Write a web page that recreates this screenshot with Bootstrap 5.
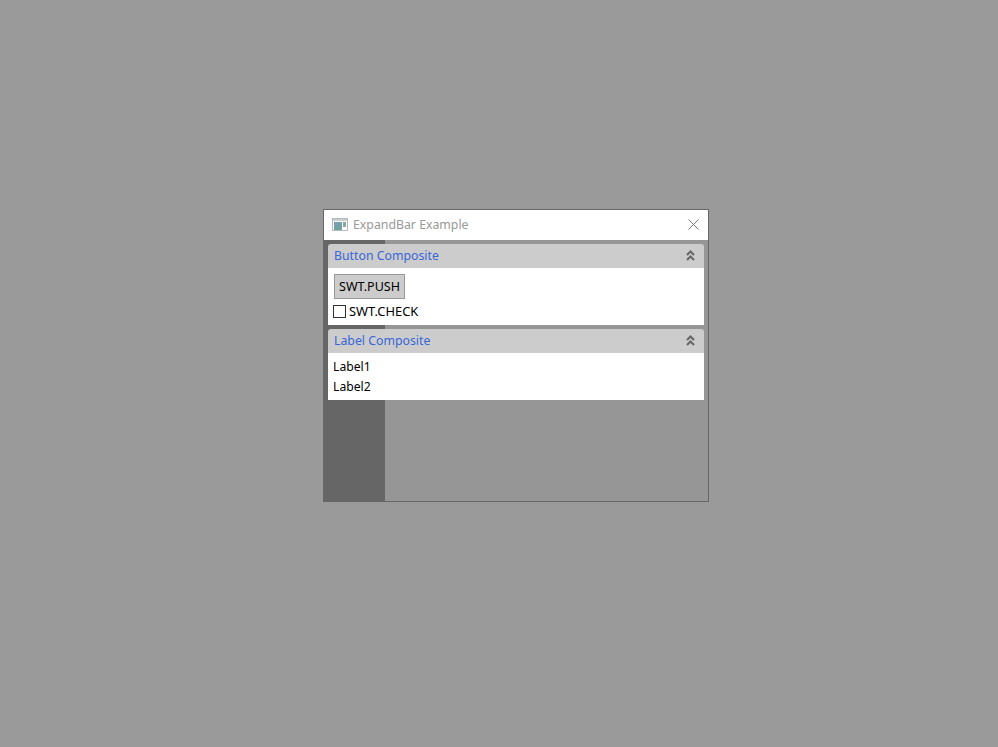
<!DOCTYPE html>
<html lang="en"><head><meta charset="utf-8"><title>ExpandBar Example</title>
<link href="https://cdn.jsdelivr.net/npm/bootstrap@5.3.0/dist/css/bootstrap.min.css" rel="stylesheet">
<style>
html,body{height:100%}
body{background:#9a9a9a;font-family:"Noto Sans","Noto Sans CJK SC",sans-serif;font-size:12.2px;padding:209px 0 0 323px;margin:0;color:#000}
.swin{width:386px;height:293px;border:1px solid #666;background:#fff}
.stitle{height:30px;padding:0 8px;color:#999;font-size:12.3px}
.sclose{margin-left:auto;margin-right:1px;margin-bottom:1px}
.sticon{margin-right:5px;margin-bottom:2px}
.sbody{height:261px;padding:4px 4px 0;background:linear-gradient(90deg,#666 61px,#969696 61px)}
.spanel{margin-bottom:4px}
.shead{height:24px;background:#ccc;color:#3a66d8;padding:0 9px 0 6px;border-radius:3px 3px 0 0;font-size:12.3px}
.schev{margin-bottom:2px}
.scontent{background:#fff}
.spush{height:25px;width:71px;margin:0 0 0 6px;background:#ccc;border:1px solid #999;border-radius:0;padding:2px 0 0;font-size:12.5px;color:#000;font-family:inherit;display:block}
.scheck{margin:2px 0 0 5px;height:20px;font-size:12.9px}
.schecktext{padding-top:2px}
.sbox{width:13px;height:13px;border:1px solid #333;background:#fff;margin-right:3px;flex:none}
.slabel{height:20px;padding-left:5px}
.sp1{height:57px;padding-top:6px}.sp2{height:47px;padding-top:4px}
</style></head>
<body>
<div class="swin d-flex flex-column">
  <div class="stitle d-flex align-items-center">
    <svg class="sticon" width="16" height="13" viewBox="0 0 16 13" aria-hidden="true"><rect x=".5" y=".5" width="15" height="12" fill="#fff" stroke="#b5b9bd"/><rect x="1" y="1" width="14" height="2" fill="#c9ced2"/><rect x="2" y="4" width="8" height="8" fill="#6fa3a6"/><rect x="2" y="4" width="4" height="4" fill="#7f9cb2"/><rect x="11" y="4" width="3" height="5" fill="#8aa5a6"/></svg>
    <span>ExpandBar Example</span>
    <svg class="sclose" width="11" height="11" viewBox="0 0 11 11" aria-hidden="true"><path d="M.5.5l10 10M10.500.5l-10 10" stroke="#777" fill="none"/></svg>
  </div>
  <div class="sbody">
    <div class="spanel">
      <div class="shead d-flex align-items-center justify-content-between"><span>Button Composite</span>
        <svg class="schev" width="9" height="11" viewBox="0 0 9 11" aria-hidden="true"><path d="M1 5l3.500-3.500L8 5M1 10l3.500-3.500L8 10" stroke="#666" stroke-width="2" fill="none"/></svg></div>
      <div class="scontent sp1">
        <button type="button" class="spush">SWT.PUSH</button>
        <div class="scheck d-flex align-items-center"><span class="sbox"></span><span class="schecktext">SWT.CHECK</span></div>
      </div>
    </div>
    <div class="spanel">
      <div class="shead d-flex align-items-center justify-content-between"><span>Label Composite</span>
        <svg class="schev" width="9" height="11" viewBox="0 0 9 11" aria-hidden="true"><path d="M1 5l3.500-3.500L8 5M1 10l3.500-3.500L8 10" stroke="#666" stroke-width="2" fill="none"/></svg></div>
      <div class="scontent sp2">
        <div class="slabel d-flex align-items-center">Label1</div>
        <div class="slabel d-flex align-items-center">Label2</div>
      </div>
    </div>
  </div>
</div>
<script src="https://cdn.jsdelivr.net/npm/bootstrap@5.3.0/dist/js/bootstrap.bundle.min.js"></script>
</body></html>
